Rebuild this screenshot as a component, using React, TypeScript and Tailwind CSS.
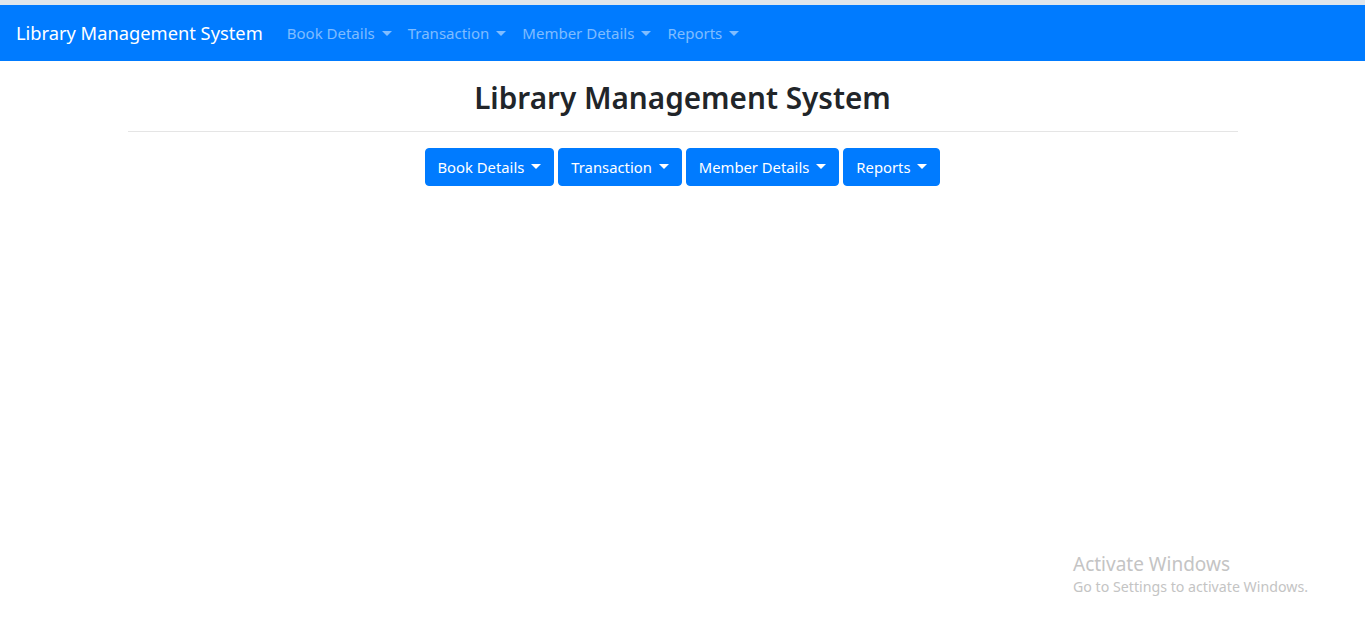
const font = { fontFamily: '"Noto Sans", "Open Sans", Arial, sans-serif' };

const menus = ["Book Details", "Transaction", "Member Details", "Reports"];

function Caret() {
  return (
    <span className="ml-[7px] inline-block h-0 w-0 border-x-[5px] border-t-[5px] border-x-transparent border-t-current align-[3px]" />
  );
}

export default function App() {
  return (
    <div className="relative min-h-[629px] bg-white text-[#212529]" style={font}>
      <div className="h-[5px] bg-[#dfe6ec]" />
      <nav className="flex h-[56px] items-center bg-[#007bff] px-4">
        <a className="mr-4 whitespace-nowrap text-[18.3px] text-white">Library Management System</a>
        <ul className="flex items-center">
          {menus.map((m) => (
            <li key={m} className="flex items-center px-2 text-[15px] text-white/50">
              {m}
              <Caret />
            </li>
          ))}
        </ul>
      </nav>

      <div className="mx-auto w-[1140px] px-[15px]">
        <h2 className="mt-[19px] text-center text-[29.7px] font-semibold leading-[1.2]">Library Management System</h2>
        <hr className="mt-[15px] border-t border-[#e5e5e5]" />
        <div className="mt-4 flex justify-center gap-1">
          {menus.map((m) => (
            <button
              key={m}
              className="flex h-[38px] items-center rounded-[4px] border border-[#007bff] bg-[#007bff] px-3 text-[14.8px] text-white"
            >
              {m}
              <Caret />
            </button>
          ))}
        </div>
      </div>

      <div className="absolute left-[1073px] top-[551px] text-[#c4c4c4]">
        <div className="text-[19px] leading-[26px]">Activate Windows</div>
        <div className="text-[14.2px] leading-[20px]">Go to Settings to activate Windows.</div>
      </div>
    </div>
  );
}
